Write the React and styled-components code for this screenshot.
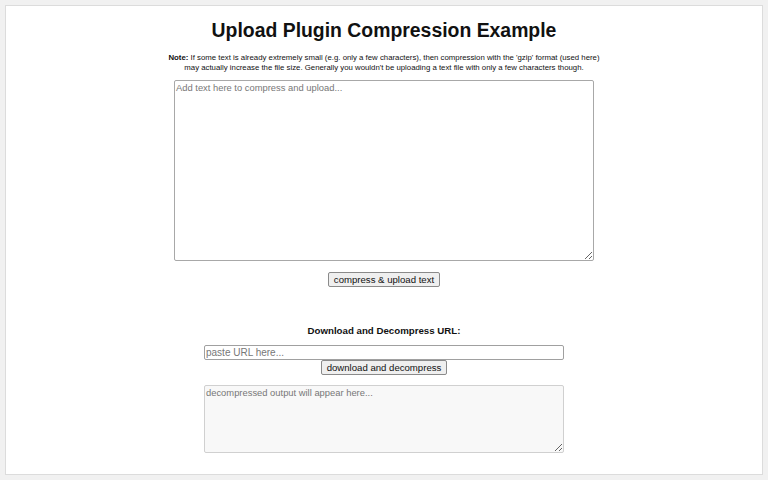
import React from "react";
import styled, { createGlobalStyle } from "styled-components";

const Global = createGlobalStyle`
  html, body { margin: 0; padding: 0; background: #f1f1f1; }
  body { font-family: "Liberation Sans", Arial, sans-serif; color: #111; }
`;

const Page = styled.div`
  padding: 5px 5px 5px 5px;
  height: 480px;
  box-sizing: border-box;
`;

const Card = styled.div`
  background: #fff;
  border: 1px solid #dcdcdc;
  height: 470px;
  box-sizing: border-box;
  display: flex;
  flex-direction: column;
  align-items: center;
  padding-top: 14px;
`;

const Title = styled.h1`
  font-size: 19.4px;
  font-weight: bold;
  margin: 0 0 13px;
  line-height: 20px;
`;

const Note = styled.p`
  font-size: 7.8px;
  line-height: 10px;
  text-align: center;
  margin: 0 0 7px;
  white-space: nowrap;
  color: #111;
`;

const Area = styled.textarea`
  width: ${(p) => p.$w}px;
  height: ${(p) => p.$h}px;
  box-sizing: border-box;
  border: 1px solid ${(p) => (p.$muted ? "#d0d0d0" : "#a8a8a8")};
  border-radius: 2px;
  background: ${(p) => (p.$muted ? "#f8f8f8" : "#fff")};
  font-family: "Liberation Sans", Arial, sans-serif;
  font-size: 9.4px;
  padding: 1px 1px;
  margin: 0;
  display: block;
  &::placeholder { color: #777; }
`;

const Button = styled.button`
  font-family: "Liberation Sans", Arial, sans-serif;
  font-size: 9.6px;
  line-height: 11px;
  padding: 1px 5px;
  height: 15px;
  border: 1px solid #8a8a8a;
  border-radius: 2px;
  background: #efefef;
  color: #111;
  margin-top: ${(p) => p.$mt || 0}px;
`;

const SubTitle = styled.h3`
  font-size: 9.7px;
  font-weight: bold;
  margin: 38px 0 8px;
  line-height: 12px;
`;

const UrlInput = styled.input`
  width: 360px;
  height: 15px;
  box-sizing: border-box;
  border: 1px solid #a0a0a0;
  border-radius: 2px;
  font-family: "Liberation Sans", Arial, sans-serif;
  font-size: 10px;
  padding: 0 1px;
  margin: 0;
  &::placeholder { color: #777; }
`;

const Spacer = styled.div`
  height: ${(p) => p.$h}px;
`;

export default function App() {
  return (
    <>
      <Global />
      <Page>
        <Card>
          <Title>Upload Plugin Compression Example</Title>
          <Note>
            <b>Note:</b> If some text is already extremely small (e.g. only a few characters), then compression with the 'gzip' format (used here)
            <br />
            may actually increase the file size. Generally you wouldn't be uploading a text file with only a few characters though.
          </Note>
          <Area $w={420} $h={181} placeholder="Add text here to compress and upload..." />
          <Button $mt={11}>compress &amp; upload text</Button>
          <SubTitle>Download and Decompress URL:</SubTitle>
          <UrlInput placeholder="paste URL here..." />
          <Button>download and decompress</Button>
          <Spacer $h={10} />
          <Area $w={360} $h={68} $muted readOnly placeholder="decompressed output will appear here..." />
        </Card>
      </Page>
    </>
  );
}
